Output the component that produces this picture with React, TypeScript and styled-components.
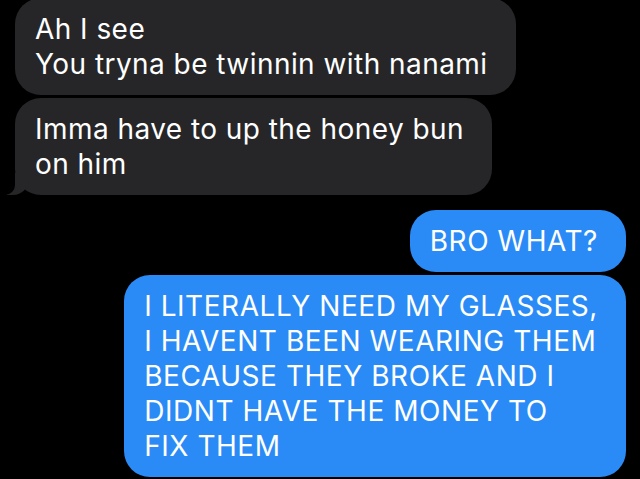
import React from 'react';
import styled, { createGlobalStyle, css } from 'styled-components';

const GREY = '#262628';
const BLUE = '#2a8bf7';

const GlobalStyle = createGlobalStyle`
  html, body {
    margin: 0;
    padding: 0;
    background: #000;
  }
  body {
    font-family: Inter, "Liberation Sans", Arial, sans-serif;
    -webkit-font-smoothing: antialiased;
  }
`;

const Screen = styled.div`
  width: 640px;
  height: 479px;
  overflow: hidden;
  background: #000;
`;

const Thread = styled.div`
  display: flex;
  flex-direction: column;
  gap: 15px;
  padding: 0 14px 0 15px;
  margin-top: -2px;
`;

const Group = styled.div<{ $side: 'left' | 'right' }>`
  display: flex;
  flex-direction: column;
  gap: 3px;
  align-items: ${({ $side }) => ($side === 'left' ? 'flex-start' : 'flex-end')};
`;

const Bubble = styled.div<{ $side: 'left' | 'right'; $tail?: boolean }>`
  position: relative;
  padding: 14px 28px 13px 20px;
  border-radius: 26px;
  font-size: 28px;
  line-height: 35px;
  letter-spacing: 0.45px;
  color: #fff;
  white-space: nowrap;
  background: ${({ $side }) => ($side === 'left' ? GREY : BLUE)};

  ${({ $tail, $side }) =>
    $tail &&
    $side === 'left' &&
    css`
      &::before {
        content: '';
        position: absolute;
        bottom: 0;
        left: -8px;
        width: 22px;
        height: 22px;
        background: ${GREY};
        border-bottom-right-radius: 16px;
      }
      &::after {
        content: '';
        position: absolute;
        bottom: 0;
        left: -12px;
        width: 12px;
        height: 22px;
        background: #000;
        border-bottom-right-radius: 10px;
      }
    `}

  ${({ $tail, $side }) =>
    $tail &&
    $side === 'right' &&
    css`
      &::before {
        content: '';
        position: absolute;
        bottom: 0;
        right: -8px;
        width: 22px;
        height: 22px;
        background: ${BLUE};
        border-bottom-left-radius: 16px;
      }
      &::after {
        content: '';
        position: absolute;
        bottom: 0;
        right: -12px;
        width: 12px;
        height: 22px;
        background: #000;
        border-bottom-left-radius: 10px;
      }
    `}
`;

const Line = styled.span`
  display: block;
  position: relative;
  z-index: 1;
`;

const Caps = styled(Line)`
  letter-spacing: 0.55px;
`;

const App = () => (
  <Screen>
    <GlobalStyle />
    <Thread>
      <Group $side="left">
        <Bubble $side="left">
          <Line>Ah I see</Line>
          <Line>You tryna be twinnin with nanami</Line>
        </Bubble>
        <Bubble $side="left" $tail>
          <Line>Imma have to up the honey bun</Line>
          <Line>on him</Line>
        </Bubble>
      </Group>
      <Group $side="right">
        <Bubble $side="right">
          <Caps>BRO WHAT?</Caps>
        </Bubble>
        <Bubble $side="right">
          <Caps>I LITERALLY NEED MY GLASSES,</Caps>
          <Caps>I HAVENT BEEN WEARING THEM</Caps>
          <Caps>BECAUSE THEY BROKE AND I</Caps>
          <Caps>DIDNT HAVE THE MONEY TO</Caps>
          <Caps>FIX THEM</Caps>
        </Bubble>
      </Group>
    </Thread>
  </Screen>
);

export default App;
